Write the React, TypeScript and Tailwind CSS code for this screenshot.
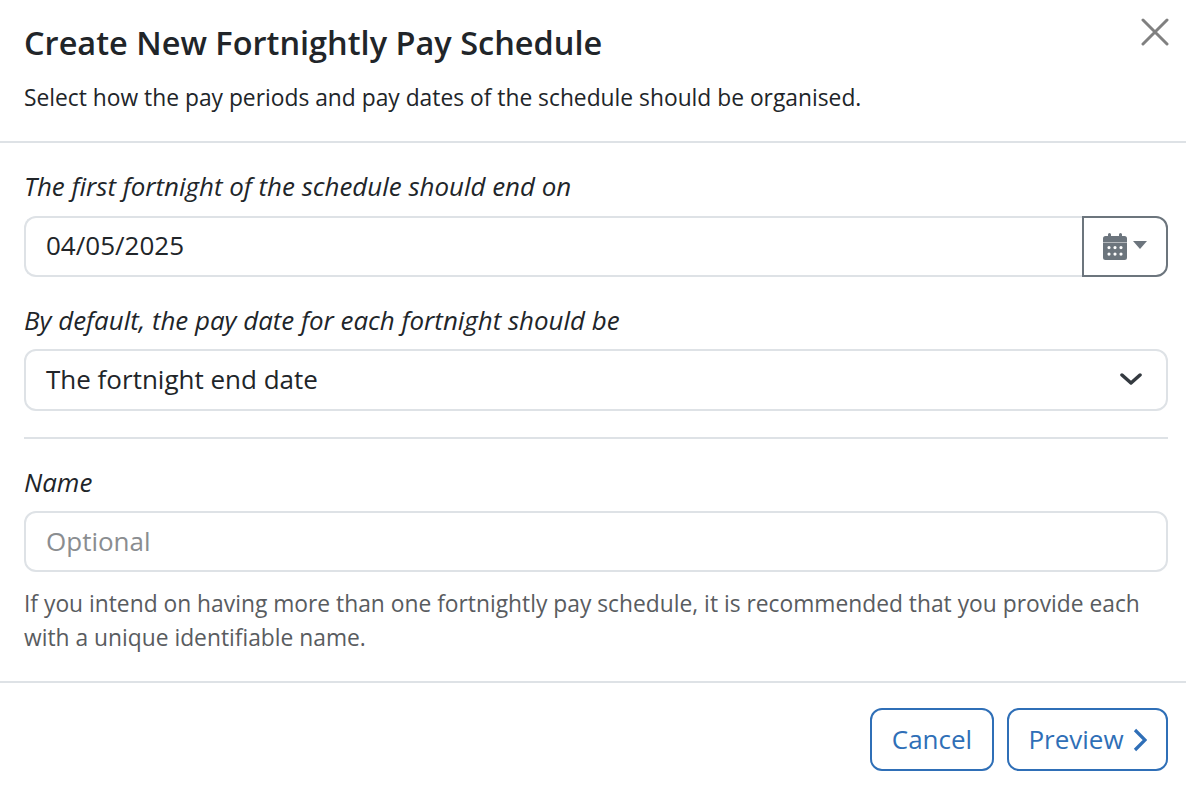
export default function App() {
  return (
    <div className="w-[1186px] h-[792px] bg-white text-[#212529] font-['Open_Sans',sans-serif] overflow-hidden">
      {/* Header */}
      <div className="relative h-[143px] border-b-2 border-[#dee2e6] pl-6 pr-[18px] pt-[18px]">
        <h1 className="text-[32.5px] leading-[50px] font-semibold">Create New Fortnightly Pay Schedule</h1>
        <p className="mt-[13px] text-[22.8px] leading-[34px]">Select how the pay periods and pay dates of the schedule should be organised.</p>
        <button className="absolute left-[1141px] top-[18px] text-[#808080]">
          <svg width="28" height="28" viewBox="0 0 28 28" fill="none" stroke="currentColor" strokeWidth="3" strokeLinecap="round">
            <path d="M2 2 L26 26 M26 2 L2 26" />
          </svg>
        </button>
      </div>

      {/* Body */}
      <div className="pl-6 pr-[18px] pt-[25px]">
        <label className="block text-[25.9px] leading-[36px] italic">The first fortnight of the schedule should end on</label>
        <div className="mt-[12px] flex h-[61px]">
          <div className="flex-1 flex items-center pl-[20px] pb-[2px] border-2 border-r-0 border-[#dee2e6] rounded-l-xl text-[26px]">04/05/2025</div>
          <button className="w-[86px] flex items-center justify-center gap-[6px] border-2 border-[#6c757d] rounded-r-xl text-[#6c757d]">
            <svg width="24" height="27" viewBox="0 0 24 27" fill="currentColor">
              <path d="M5 1.500a1.500 1.500 0 0 1 3 0V3h8V1.500a1.500 1.500 0 0 1 3 0V3h2.500A2.500 2.500 0 0 1 24 5.500V9.400H0V5.500A2.500 2.500 0 0 1 2.500 3H5Z" />
              <path
                fillRule="evenodd"
                d="M0 10h24V24.500A2.500 2.500 0 0 1 21.500 27h-19A2.500 2.500 0 0 1 0 24.500ZM6 13a1.600 1.600 0 1 0 0 3.200a1.600 1.600 0 0 0 0-3.200Zm6 0a1.600 1.600 0 1 0 0 3.200a1.600 1.600 0 0 0 0-3.200Zm6 0a1.600 1.600 0 1 0 0 3.200a1.600 1.600 0 0 0 0-3.200ZM6 19.500a1.600 1.600 0 1 0 0 3.200a1.600 1.600 0 0 0 0-3.200Zm6 0a1.600 1.600 0 1 0 0 3.200a1.600 1.600 0 0 0 0-3.200Zm6 0a1.600 1.600 0 1 0 0 3.200a1.600 1.600 0 0 0 0-3.200Z"
              />
            </svg>
            <svg width="14" height="8" viewBox="0 0 14 8" fill="currentColor" className="mb-[3px]">
              <path d="M0 0h14L7 8Z" />
            </svg>
          </button>
        </div>

        <label className="mt-[25px] block text-[25.9px] leading-[36px] italic">By default, the pay date for each fortnight should be</label>
        <div className="mt-[11px] flex h-[62px] items-center justify-between pl-[20px] pr-[24px] pb-[2px] border-2 border-[#dee2e6] rounded-xl text-[26px]">
          <span>The fortnight end date</span>
          <svg width="22" height="14" viewBox="0 0 22 14" fill="none" stroke="#343a40" strokeWidth="3.500" strokeLinecap="round" strokeLinejoin="round">
            <path d="M2 3 L11 11 L20 3" />
          </svg>
        </div>

        <div className="mt-[26px] border-t-2 border-[#dee2e6]" />

        <label className="mt-[25px] block text-[25.9px] leading-[36px] italic">Name</label>
        <div className="mt-[11px] flex h-[61px] items-center pl-[20px] border-2 border-[#dee2e6] rounded-xl text-[26px] text-[#8a8d90]">Optional</div>
        <p className="mt-[15px] text-[22.8px] leading-[34px] text-[#595c5f]">
          If you intend on having more than one fortnightly pay schedule, it is recommended that you provide each with a unique identifiable name.
        </p>
      </div>

      {/* Footer */}
      <div className="mt-[26px] border-t-2 border-[#dee2e6] px-[18px] pt-[25px] flex justify-end gap-[13px]">
        <button className="h-[63px] w-[124px] border-2 border-[#2f6fb7] rounded-xl text-[#2f6fb7] text-[26px]">Cancel</button>
        <button className="h-[63px] w-[161px] border-2 border-[#2f6fb7] rounded-xl text-[#2f6fb7] text-[26px] flex items-center justify-center gap-[9px]">
          Preview
          <svg width="14" height="24" viewBox="0 0 14 24" fill="none" stroke="currentColor" strokeWidth="3.200">
            <path d="M2 2 L12 12 L2 22" />
          </svg>
        </button>
      </div>
    </div>
  );
}
